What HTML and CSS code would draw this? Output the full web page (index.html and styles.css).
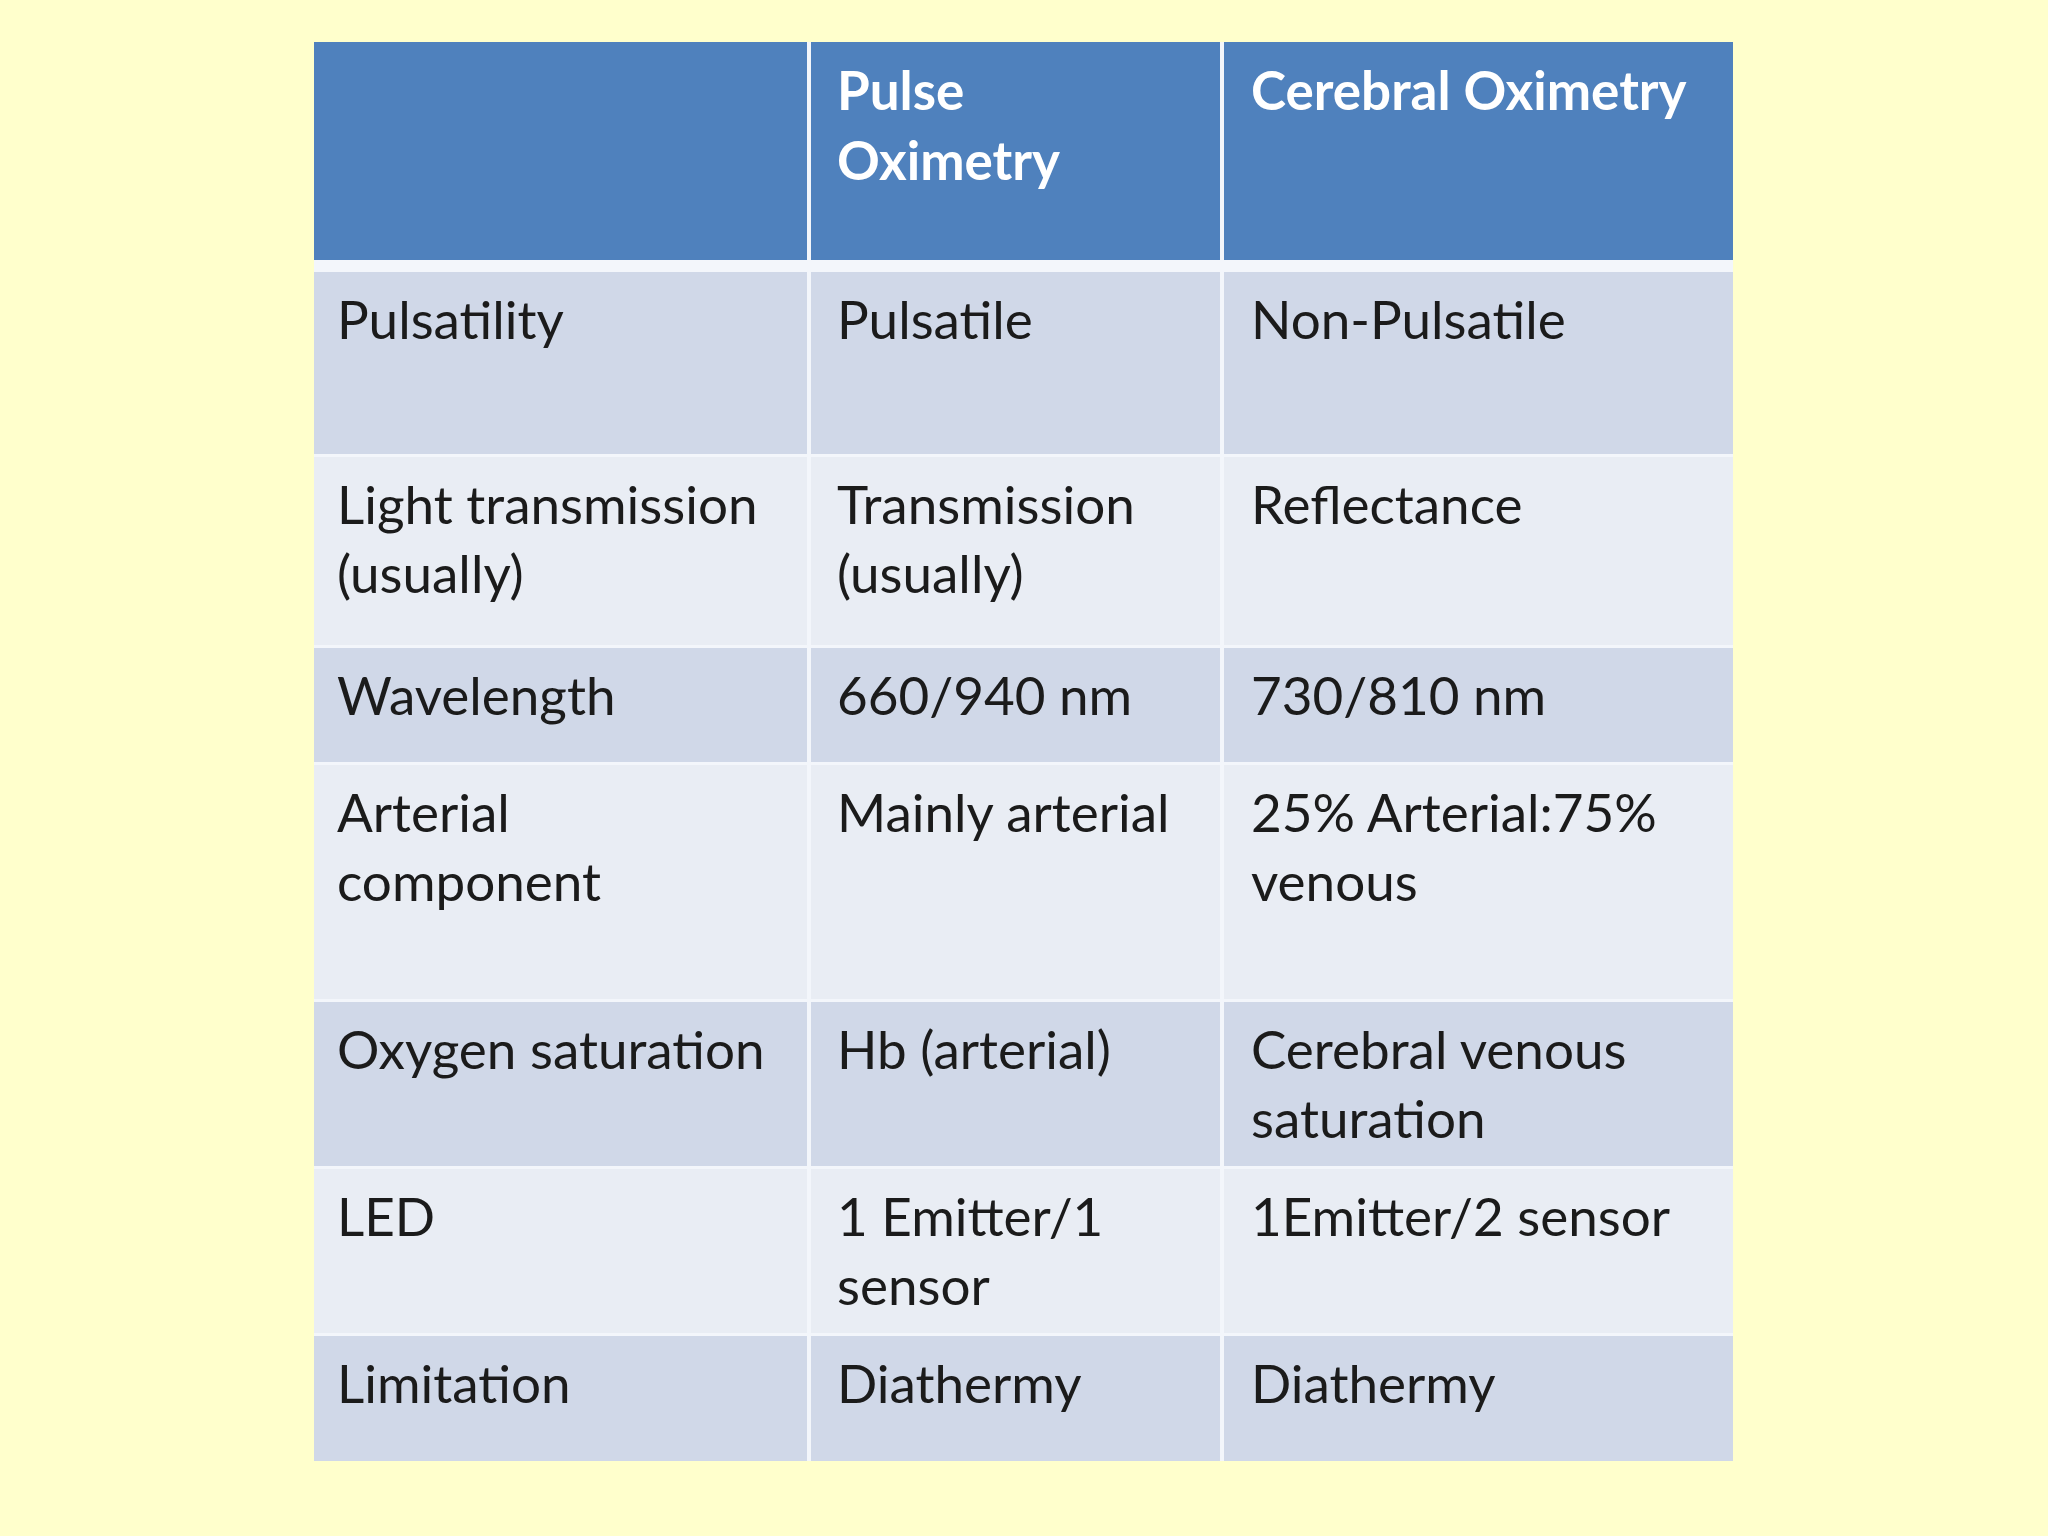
FILE: index.html
```html
<!DOCTYPE html>
<html lang="en">
<head>
<meta charset="utf-8">
<title>Pulse vs Cerebral Oximetry</title>
<link rel="stylesheet" href="styles.css">
</head>
<body>
<main class="slide">
  <div class="table">
    <div class="cell head"></div>
    <div class="cell head">Pulse<br>Oximetry</div>
    <div class="cell head">Cerebral Oximetry</div>

    <div class="cell dark">Pulsatility</div>
    <div class="cell dark">Pulsatile</div>
    <div class="cell dark">Non-Pulsatile</div>

    <div class="cell light">Light transmission<br>(usually)</div>
    <div class="cell light">Transmission<br>(usually)</div>
    <div class="cell light">Reflectance</div>

    <div class="cell dark">Wavelength</div>
    <div class="cell dark">660/940 nm</div>
    <div class="cell dark">730/810 nm</div>

    <div class="cell light">Arterial<br>component</div>
    <div class="cell light">Mainly arterial</div>
    <div class="cell light">25% Arterial:75%<br>venous</div>

    <div class="cell dark">Oxygen saturation</div>
    <div class="cell dark">Hb (arterial)</div>
    <div class="cell dark">Cerebral venous<br>saturation</div>

    <div class="cell light">LED</div>
    <div class="cell light">1 Emitter/1<br>sensor</div>
    <div class="cell light">1Emitter/2 sensor</div>

    <div class="cell dark">Limitation</div>
    <div class="cell dark">Diathermy</div>
    <div class="cell dark">Diathermy</div>
  </div>
</main>
</body>
</html>
```
FILE: styles.css
```css
html, body {
  margin: 0;
  padding: 0;
  background: #ffffcc;
}

.slide {
  width: 2048px;
  height: 1536px;
  box-sizing: border-box;
  padding: 42px 0 0 314px;
  background: #ffffcc;
}

.table {
  display: grid;
  width: 1419px;
  grid-template-columns: 493px 409px 509px;
  grid-template-rows: 227px 182px 188px 114px 234px 164px 164px 125px;
  column-gap: 4px;
  row-gap: 3px;
  background: #f3f6fb;
  font-family: Lato, "Open Sans", sans-serif;
  font-size: 53px;
  line-height: 69px;
  color: #1b1b1b;
}

.cell {
  box-sizing: border-box;
  padding: 12px 16px 0 26px;
  white-space: nowrap;
}

.cell:nth-child(3n+1) {
  padding-left: 23px;
}

.cell:nth-child(3n) {
  padding-left: 27px;
}

.head {
  background: #4f81bd;
  color: #ffffff;
  font-weight: bold;
  line-height: 70px;
  padding-top: 13px;
  margin-bottom: 9px;
}

.dark {
  background: #d0d8e8;
}

.light {
  background: #e9edf4;
}
```
